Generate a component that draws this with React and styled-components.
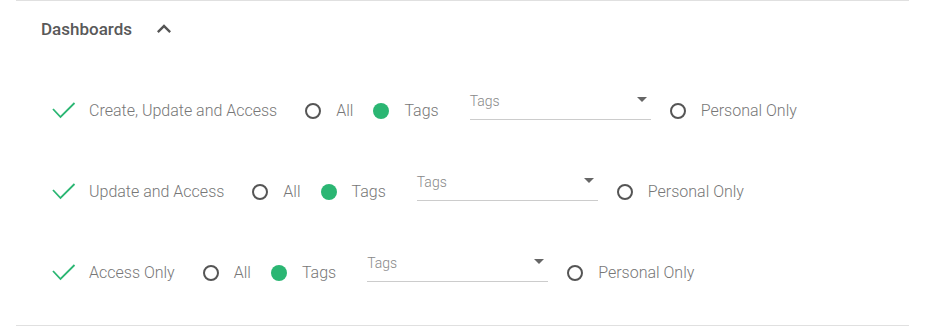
import styled, { createGlobalStyle } from "styled-components";

const GlobalStyle = createGlobalStyle`
  body {
    margin: 0;
    background: #fff;
    font-family: Roboto, "Liberation Sans", Arial, sans-serif;
  }
`;

const GREEN = "#2bb673";

const Section = styled.section`
  margin-left: 16px;
  width: 893px;
  border-top: 1px solid #e0e0e0;
  border-bottom: 1px solid #e0e0e0;
`;

const Header = styled.div`
  display: flex;
  align-items: center;
  height: 55px;
  padding-left: 25px;
`;

const Title = styled.h2`
  margin: 0;
  font-size: 17px;
  font-weight: 500;
  color: #595959;
`;

const Chevron = styled.svg`
  width: 28px;
  height: 28px;
  margin-left: 18px;
  fill: #555;
`;

const List = styled.div`
  display: flex;
  flex-direction: column;
  padding: 14px 0 12px 36px;
`;

const Row = styled.div`
  display: flex;
  align-items: center;
  height: 81px;
`;

const Check = styled.svg`
  width: 24px;
  height: 18px;
  margin-right: 13px;
  fill: none;
  stroke: ${GREEN};
  stroke-width: 1.8;
`;

const Text = styled.span`
  font-size: 16px;
  font-weight: 300;
  color: #777;
  white-space: nowrap;
`;

const Option = styled.label`
  display: flex;
  align-items: center;
  gap: 15px;
  margin-left: ${(p) => p.$gap}px;
`;

const Radio = styled.span`
  box-sizing: border-box;
  width: 16px;
  height: 16px;
  border-radius: 50%;
  border: ${(p) => (p.$checked ? "none" : "2px solid #555")};
  background: ${(p) => (p.$checked ? GREEN : "transparent")};
`;

const Select = styled.div`
  position: relative;
  box-sizing: border-box;
  width: 181px;
  height: 27px;
  margin: 0 0 9px 31px;
  border-bottom: 1px solid #ccc;
  font-size: 14px;
  font-weight: 300;
  color: #888;
`;

const Arrow = styled.span`
  position: absolute;
  right: 4px;
  top: 4px;
  width: 0;
  height: 0;
  border-left: 5px solid transparent;
  border-right: 5px solid transparent;
  border-top: 5px solid #666;
`;

const rows = [
  "Create, Update and Access",
  "Update and Access",
  "Access Only",
];

const PermissionRow = ({ label }) => (
  <Row>
    <Check viewBox="0 0 24 18">
      <polyline points="1,7 8.5,15 22.5,1" />
    </Check>
    <Text>{label}</Text>
    <Option $gap={28}>
      <Radio />
      <Text>All</Text>
    </Option>
    <Option $gap={20}>
      <Radio $checked />
      <Text>Tags</Text>
    </Option>
    <Select>
      Tags
      <Arrow />
    </Select>
    <Option $gap={19}>
      <Radio />
      <Text>Personal Only</Text>
    </Option>
  </Row>
);

const App = () => (
  <>
    <GlobalStyle />
    <Section>
      <Header>
        <Title>Dashboards</Title>
        <Chevron viewBox="0 0 24 24">
          <path d="M12 8l-6 6 1.41 1.41L12 10.83l4.59 4.58L18 14z" />
        </Chevron>
      </Header>
      <List>
        {rows.map((r) => (
          <PermissionRow key={r} label={r} />
        ))}
      </List>
    </Section>
  </>
);

export default App;
